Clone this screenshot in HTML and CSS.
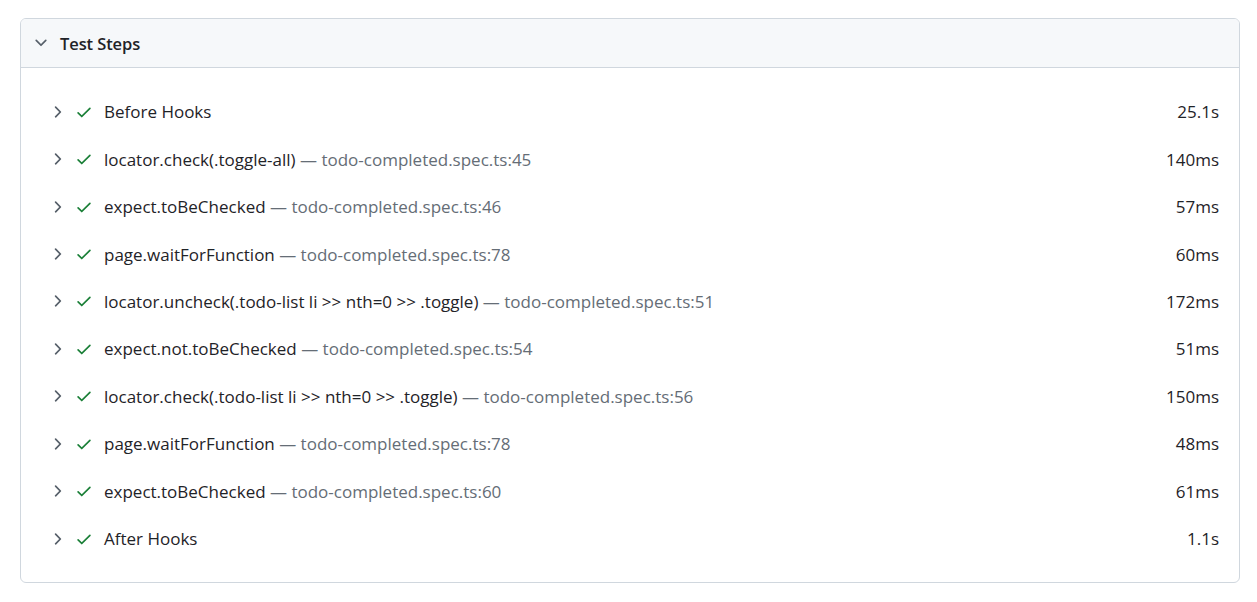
FILE: index.html
```html
<!DOCTYPE html>
<html>
<head>
<meta charset="utf-8">
<link rel="stylesheet" href="styles.css">
</head>
<body>
<div class="panel">
  <div class="panel-header">
    <svg class="icon-down" viewBox="0 0 16 16" width="18" height="18"><path d="M12.78 5.22a.749.749 0 0 1 0 1.06l-4.25 4.25a.749.749 0 0 1-1.06 0L3.22 6.280a.749.749 0 1 1 1.060-1.060L8 8.939l3.72-3.719a.749.749 0 0 1 1.060 0Z"/></svg>
    <span class="title">Test Steps</span>
  </div>
  <div class="panel-body">
    <div class="step"><svg class="chev" viewBox="0 0 16 16" width="18" height="18"><path d="M6.22 3.22a.75.75 0 0 1 1.06 0l4.25 4.25a.75.75 0 0 1 0 1.06l-4.25 4.25a.751.751 0 0 1-1.042-.018.751.751 0 0 1-.018-1.042L9.94 8 6.22 4.28a.75.75 0 0 1 0-1.06Z"/></svg><svg class="check" viewBox="0 0 16 16" width="18" height="18"><path d="M13.78 4.22a.75.75 0 0 1 0 1.06l-7.25 7.25a.75.75 0 0 1-1.06 0L2.22 9.28a.751.751 0 0 1 .018-1.042.751.751 0 0 1 1.042-.018L6 10.94l6.72-6.72a.75.75 0 0 1 1.06 0Z"/></svg><span class="name">Before Hooks</span><span class="dur">25.1s</span></div>
    <div class="step"><svg class="chev" viewBox="0 0 16 16" width="18" height="18"><path d="M6.22 3.22a.75.75 0 0 1 1.06 0l4.25 4.25a.75.75 0 0 1 0 1.06l-4.25 4.25a.751.751 0 0 1-1.042-.018.751.751 0 0 1-.018-1.042L9.94 8 6.22 4.28a.75.75 0 0 1 0-1.06Z"/></svg><svg class="check" viewBox="0 0 16 16" width="18" height="18"><path d="M13.78 4.22a.75.75 0 0 1 0 1.06l-7.25 7.25a.75.75 0 0 1-1.06 0L2.22 9.28a.751.751 0 0 1 .018-1.042.751.751 0 0 1 1.042-.018L6 10.94l6.72-6.72a.75.75 0 0 1 1.06 0Z"/></svg><span class="name">locator.check(.toggle-all)<span class="loc"> — todo-completed.spec.ts:45</span></span><span class="dur">140ms</span></div>
    <div class="step"><svg class="chev" viewBox="0 0 16 16" width="18" height="18"><path d="M6.22 3.22a.75.75 0 0 1 1.06 0l4.25 4.25a.75.75 0 0 1 0 1.06l-4.25 4.25a.751.751 0 0 1-1.042-.018.751.751 0 0 1-.018-1.042L9.94 8 6.22 4.28a.75.75 0 0 1 0-1.06Z"/></svg><svg class="check" viewBox="0 0 16 16" width="18" height="18"><path d="M13.78 4.22a.75.75 0 0 1 0 1.06l-7.25 7.25a.75.75 0 0 1-1.06 0L2.22 9.28a.751.751 0 0 1 .018-1.042.751.751 0 0 1 1.042-.018L6 10.94l6.72-6.72a.75.75 0 0 1 1.06 0Z"/></svg><span class="name">expect.toBeChecked<span class="loc"> — todo-completed.spec.ts:46</span></span><span class="dur">57ms</span></div>
    <div class="step"><svg class="chev" viewBox="0 0 16 16" width="18" height="18"><path d="M6.22 3.22a.75.75 0 0 1 1.06 0l4.25 4.25a.75.75 0 0 1 0 1.06l-4.25 4.25a.751.751 0 0 1-1.042-.018.751.751 0 0 1-.018-1.042L9.94 8 6.22 4.28a.75.75 0 0 1 0-1.06Z"/></svg><svg class="check" viewBox="0 0 16 16" width="18" height="18"><path d="M13.78 4.22a.75.75 0 0 1 0 1.06l-7.25 7.25a.75.75 0 0 1-1.06 0L2.22 9.28a.751.751 0 0 1 .018-1.042.751.751 0 0 1 1.042-.018L6 10.94l6.72-6.72a.75.75 0 0 1 1.06 0Z"/></svg><span class="name">page.waitForFunction<span class="loc"> — todo-completed.spec.ts:78</span></span><span class="dur">60ms</span></div>
    <div class="step"><svg class="chev" viewBox="0 0 16 16" width="18" height="18"><path d="M6.22 3.22a.75.75 0 0 1 1.06 0l4.25 4.25a.75.75 0 0 1 0 1.06l-4.25 4.25a.751.751 0 0 1-1.042-.018.751.751 0 0 1-.018-1.042L9.94 8 6.22 4.28a.75.75 0 0 1 0-1.06Z"/></svg><svg class="check" viewBox="0 0 16 16" width="18" height="18"><path d="M13.78 4.22a.75.75 0 0 1 0 1.06l-7.25 7.25a.75.75 0 0 1-1.06 0L2.22 9.28a.751.751 0 0 1 .018-1.042.751.751 0 0 1 1.042-.018L6 10.94l6.72-6.72a.75.75 0 0 1 1.06 0Z"/></svg><span class="name">locator.uncheck(.todo-list li &gt;&gt; nth=0 &gt;&gt; .toggle)<span class="loc"> — todo-completed.spec.ts:51</span></span><span class="dur">172ms</span></div>
    <div class="step"><svg class="chev" viewBox="0 0 16 16" width="18" height="18"><path d="M6.22 3.22a.75.75 0 0 1 1.06 0l4.25 4.25a.75.75 0 0 1 0 1.06l-4.25 4.25a.751.751 0 0 1-1.042-.018.751.751 0 0 1-.018-1.042L9.94 8 6.22 4.28a.75.75 0 0 1 0-1.06Z"/></svg><svg class="check" viewBox="0 0 16 16" width="18" height="18"><path d="M13.78 4.22a.75.75 0 0 1 0 1.06l-7.25 7.25a.75.75 0 0 1-1.06 0L2.22 9.28a.751.751 0 0 1 .018-1.042.751.751 0 0 1 1.042-.018L6 10.94l6.72-6.72a.75.75 0 0 1 1.06 0Z"/></svg><span class="name">expect.not.toBeChecked<span class="loc"> — todo-completed.spec.ts:54</span></span><span class="dur">51ms</span></div>
    <div class="step"><svg class="chev" viewBox="0 0 16 16" width="18" height="18"><path d="M6.22 3.22a.75.75 0 0 1 1.06 0l4.25 4.25a.75.75 0 0 1 0 1.06l-4.25 4.25a.751.751 0 0 1-1.042-.018.751.751 0 0 1-.018-1.042L9.94 8 6.22 4.28a.75.75 0 0 1 0-1.06Z"/></svg><svg class="check" viewBox="0 0 16 16" width="18" height="18"><path d="M13.78 4.22a.75.75 0 0 1 0 1.06l-7.25 7.25a.75.75 0 0 1-1.06 0L2.22 9.28a.751.751 0 0 1 .018-1.042.751.751 0 0 1 1.042-.018L6 10.94l6.72-6.72a.75.75 0 0 1 1.06 0Z"/></svg><span class="name">locator.check(.todo-list li &gt;&gt; nth=0 &gt;&gt; .toggle)<span class="loc"> — todo-completed.spec.ts:56</span></span><span class="dur">150ms</span></div>
    <div class="step"><svg class="chev" viewBox="0 0 16 16" width="18" height="18"><path d="M6.22 3.22a.75.75 0 0 1 1.06 0l4.25 4.25a.75.75 0 0 1 0 1.06l-4.25 4.25a.751.751 0 0 1-1.042-.018.751.751 0 0 1-.018-1.042L9.94 8 6.22 4.28a.75.75 0 0 1 0-1.06Z"/></svg><svg class="check" viewBox="0 0 16 16" width="18" height="18"><path d="M13.78 4.22a.75.75 0 0 1 0 1.06l-7.25 7.25a.75.75 0 0 1-1.06 0L2.22 9.28a.751.751 0 0 1 .018-1.042.751.751 0 0 1 1.042-.018L6 10.94l6.72-6.72a.75.75 0 0 1 1.06 0Z"/></svg><span class="name">page.waitForFunction<span class="loc"> — todo-completed.spec.ts:78</span></span><span class="dur">48ms</span></div>
    <div class="step"><svg class="chev" viewBox="0 0 16 16" width="18" height="18"><path d="M6.22 3.22a.75.75 0 0 1 1.06 0l4.25 4.25a.75.75 0 0 1 0 1.06l-4.25 4.25a.751.751 0 0 1-1.042-.018.751.751 0 0 1-.018-1.042L9.94 8 6.22 4.28a.75.75 0 0 1 0-1.06Z"/></svg><svg class="check" viewBox="0 0 16 16" width="18" height="18"><path d="M13.78 4.22a.75.75 0 0 1 0 1.06l-7.25 7.25a.75.75 0 0 1-1.06 0L2.22 9.28a.751.751 0 0 1 .018-1.042.751.751 0 0 1 1.042-.018L6 10.94l6.72-6.72a.75.75 0 0 1 1.06 0Z"/></svg><span class="name">expect.toBeChecked<span class="loc"> — todo-completed.spec.ts:60</span></span><span class="dur">61ms</span></div>
    <div class="step"><svg class="chev" viewBox="0 0 16 16" width="18" height="18"><path d="M6.22 3.22a.75.75 0 0 1 1.06 0l4.25 4.25a.75.75 0 0 1 0 1.06l-4.25 4.25a.751.751 0 0 1-1.042-.018.751.751 0 0 1-.018-1.042L9.94 8 6.22 4.28a.75.75 0 0 1 0-1.06Z"/></svg><svg class="check" viewBox="0 0 16 16" width="18" height="18"><path d="M13.78 4.22a.75.75 0 0 1 0 1.06l-7.25 7.25a.75.75 0 0 1-1.06 0L2.22 9.28a.751.751 0 0 1 .018-1.042.751.751 0 0 1 1.042-.018L6 10.94l6.72-6.72a.75.75 0 0 1 1.06 0Z"/></svg><span class="name">After Hooks</span><span class="dur">1.1s</span></div>
  </div>
</div>
</body>
</html>
```

FILE: styles.css
```css
html, body {
  margin: 0;
  padding: 0;
  background: #ffffff;
}
body {
  font-family: "Open Sans", "Noto Sans", sans-serif;
  font-size: 17px;
  color: #1f2328;
  padding: 18px 17px 0 20px;
}
.panel {
  border: 1px solid #d0d7de;
  border-radius: 6px;
  overflow: hidden;
}
.panel-header {
  display: flex;
  align-items: center;
  height: 48px;
  background: #f6f8fa;
  border-bottom: 1px solid #d0d7de;
  padding-left: 11px;
}
.icon-down {
  fill: #57606a;
  flex: none;
}
.title {
  font-weight: 600;
  margin-left: 10px;
  font-size: 16.5px;
  letter-spacing: -0.1px;
}
.panel-body {
  padding: 20px 0 20px 0;
}
.step {
  display: flex;
  align-items: center;
  height: 47.45px;
  padding-left: 27px;
  padding-right: 20px;
}
.chev {
  fill: #57606a;
  flex: none;
}
.check {
  fill: #1a7f37;
  flex: none;
  margin-left: 9px;
}
.name {
  margin-left: 11px;
  flex: 1;
  white-space: nowrap;
}
.loc {
  color: #656d76;
}
.dur {
  flex: none;
}
```
